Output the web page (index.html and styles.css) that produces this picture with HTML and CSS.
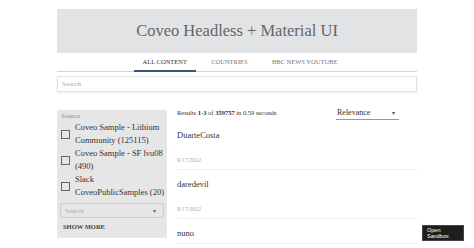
FILE: index.html
```html
<!DOCTYPE html>
<html lang="en">
<head>
    <meta charset="UTF-8">
    <meta name="viewport" content="width=device-width, initial-scale=1.0">
    <title>Coveo Headless + Material UI</title>
    <link rel="stylesheet" href="styles.css">
</head>
<body>
    <div class="app">
        <header class="hero">
            <h1>Coveo Headless + Material UI</h1>
        </header>

        <!-- Tabs -->
        <nav class="tabs">
            <a class="tab active" href="#">All Content</a>
            <a class="tab" href="#">Countries</a>
            <a class="tab" href="#">BBC News Youtube</a>
        </nav>

        <div class="searchbox">
            <input type="text" placeholder="Search">
        </div>

        <div class="main">
            <!-- Facets -->
            <aside class="facet">
                <div class="facet-title">Source</div>
                <label class="facet-value">
                    <span class="check"></span>
                    <span>Coveo Sample - Lithium Community (125115)</span>
                </label>
                <label class="facet-value">
                    <span class="check"></span>
                    <span>Coveo Sample - SF lvu08 (490)</span>
                </label>
                <label class="facet-value">
                    <span class="check"></span>
                    <span>Slack CoveoPublicSamples (20)</span>
                </label>
                <div class="facet-search">
                    <span>Search</span>
                    <span class="caret">&#9662;</span>
                </div>
                <div class="show-more">Show more</div>
            </aside>

            <!-- Results -->
            <section class="results">
                <div class="results-head">
                    <div class="summary">Results <b>1-3</b> of <b>359757</b> in 0.59 seconds</div>
                    <div class="sort">
                        <span>Relevance</span>
                        <span class="caret">&#9662;</span>
                    </div>
                </div>

                <div class="result">
                    <div class="result-title">DuarteCosta</div>
                    <div class="result-date">9/17/2022</div>
                </div>
                <div class="result">
                    <div class="result-title">daredevil</div>
                    <div class="result-date">9/17/2022</div>
                </div>
                <div class="result">
                    <div class="result-title">nuno</div>
                </div>
            </section>
        </div>
    </div>

    <a class="sandbox" href="#">Open<br>Sandbox</a>
</body>
</html>
```

FILE: styles.css
```css
body {
    font-family: "Liberation Serif", "Times New Roman", serif;
    margin: 0;
    padding: 0;
    background: #fff;
    color: #333;
    overflow: hidden;
}
.app {
    width: 360px;
    margin: 9px auto 0;
}
.hero {
    height: 44px;
    background: #e2e3e5;
    display: flex;
    align-items: center;
    justify-content: center;
}
.hero h1 {
    margin: 0;
    font-weight: normal;
    font-size: 16.5px;
    color: #666;
}
.tabs {
    height: 18px;
    display: flex;
    justify-content: center;
    background: #fff;
    border-bottom: 1px solid #d4d4d4;
    padding-left: 6px;
}
.tab {
    min-width: 41px;
    padding: 0 9px;
    display: flex;
    align-items: center;
    justify-content: center;
    font-size: 6.5px;
    text-transform: uppercase;
    color: #777;
    text-decoration: none;
    border-bottom: 2px solid transparent;
    margin-bottom: -1px;
}
.tab + .tab {
    margin-left: 4px;
}
.tab.active {
    color: #333;
    border-bottom-color: #3a5580;
}
.searchbox input {
    box-sizing: border-box;
    width: 100%;
    height: 16px;
    border: 1px solid #e2e2e2;
    box-shadow: 0 1px 2px rgba(0, 0, 0, 0.08);
    padding: 0 4px;
    font-family: inherit;
    font-size: 7px;
    outline: none;
}
.searchbox input::placeholder {
    color: #aaa;
}
.main {
    display: flex;
    gap: 10px;
    margin-top: 12px;
}
.facet {
    width: 110px;
    flex: none;
    box-sizing: border-box;
    margin-top: 6px;
    padding: 1px 3px 6px 4px;
    background: #e6e6e6;
    align-self: flex-start;
}
.facet-title {
    font-size: 7px;
    line-height: 10px;
    color: #888;
}
.facet-value {
    display: flex;
    align-items: center;
    height: 26px;
    font-size: 8.5px;
    line-height: 13px;
    color: #333;
}
.check {
    flex: none;
    width: 7px;
    height: 7px;
    border: 1px solid #666;
    margin-right: 5px;
}
.facet-search {
    margin: 4px 0 0 -1px;
    height: 15px;
    box-sizing: border-box;
    border: 1px solid #ccc;
    border-radius: 2px;
    display: flex;
    align-items: center;
    justify-content: space-between;
    padding: 0 7px 0 4px;
    font-size: 7px;
    color: #aaa;
}
.facet-search .caret {
    color: #666;
    font-size: 6px;
}
.show-more {
    margin-top: 4px;
    padding-left: 2px;
    font-size: 6.5px;
    line-height: 10px;
    font-weight: bold;
    text-transform: uppercase;
    color: #444;
}
.results {
    flex: 1;
}
.results-head {
    display: flex;
    align-items: center;
    justify-content: space-between;
    height: 17px;
}
.summary {
    font-size: 6.5px;
}
.sort {
    width: 63px;
    height: 14px;
    box-sizing: border-box;
    margin-right: 18px;
    border-bottom: 1px solid #999;
    display: flex;
    align-items: center;
    justify-content: space-between;
    padding: 0 4px 0 1px;
    font-size: 8px;
}
.sort .caret {
    font-size: 6px;
    color: #555;
}
.result {
    padding: 8px 0 4px;
    border-bottom: 1px solid #eee;
}
.result-title {
    font-size: 8.5px;
    line-height: 12px;
}
.result-date {
    margin-top: 14px;
    font-size: 6px;
    line-height: 10px;
    color: #aaa;
}
.sandbox {
    position: fixed;
    right: 10px;
    bottom: 7px;
    width: 42px;
    box-sizing: border-box;
    padding: 1px 4px;
    background: #1e1e1e;
    border: 1px solid #444;
    color: #fff;
    font-family: "Liberation Sans", Arial, sans-serif;
    font-size: 5.5px;
    line-height: 6px;
    text-decoration: none;
}
```
